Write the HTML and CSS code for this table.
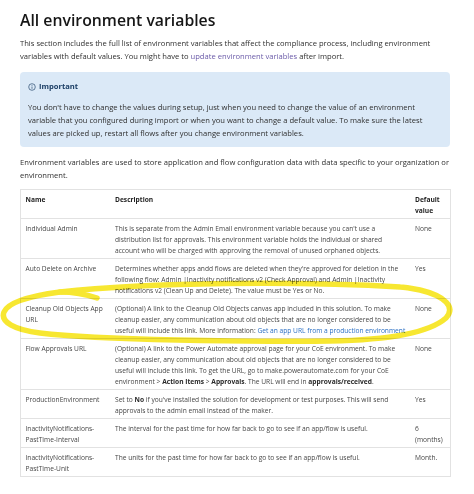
FILE: index.html
```html
<!DOCTYPE html>
<html lang="en">
<head>
<meta charset="utf-8">
<title>All environment variables</title>
<link rel="stylesheet" href="styles.css">
</head>
<body>
<main class="page">
  <h1 class="title">All environment variables</h1>
  <p class="intro">This section includes the full list of environment variables that affect the compliance process, including environment variables with default values. You might have to <a class="link-visited" href="#">update environment variables</a> after import.</p>
  <div class="alert">
    <p class="alert-title">
      <svg class="alert-icon" viewBox="0 0 16 16" aria-hidden="true"><circle cx="8" cy="8" r="6.6" fill="none" stroke="currentColor" stroke-width="1.3"/><rect x="7.35" y="7" width="1.3" height="4.6" fill="currentColor"/><circle cx="8" cy="5" r="0.85" fill="currentColor"/></svg>
      <span>Important</span>
    </p>
    <p class="alert-body">You don't have to change the values during setup, just when you need to change the value of an environment variable that you configured during import or when you want to change a default value. To make sure the latest values are picked up, restart all flows after you change environment variables.</p>
  </div>
  <p class="lead">Environment variables are used to store application and flow configuration data with data specific to your organization or environment.</p>
  <table class="vars">
    <colgroup><col class="c-name"><col class="c-desc"><col class="c-def"></colgroup>
    <thead>
      <tr><th>Name</th><th>Description</th><th>Default value</th></tr>
    </thead>
    <tbody>
      <tr><td>Individual Admin</td><td>This is separate from the Admin Email environment variable because you can't use a distribution list for approvals. This environment variable holds the individual or shared account who will be charged with approving the removal of unused orphaned objects.</td><td>None</td></tr>
      <tr><td>Auto Delete on Archive</td><td>Determines whether apps andd flows are deleted when they're approved for deletion in the following flow: Admin |Inactivity notifications v2 (Check Approval) and Admin |Inactivity notifications v2 (Clean Up and Delete). The value must be Yes or No.</td><td>Yes</td></tr>
      <tr><td>Cleanup Old Objects App URL</td><td>(Optional) A link to the Cleanup Old Objects canvas app included in this solution. To make cleanup easier, any communication about old objects that are no longer considered to be useful will include this link. More information: <a class="link" href="#">Get an app URL from a production environment</a></td><td>None</td></tr>
      <tr><td>Flow Approvals URL</td><td>(Optional) A link to the Power Automate approval page for your CoE environment. To make cleanup easier, any communication about old objects that are no longer considered to be useful will include this link. To get the URL, go to make.powerautomate.com for your CoE environment &gt; <b>Action Items</b> &gt; <b>Approvals</b>. The URL will end in <b>approvals/received</b>.</td><td>None</td></tr>
      <tr><td>ProductionEnvironment</td><td>Set to <b>No</b> if you've installed the solution for development or test purposes. This will send approvals to the admin email instead of the maker.</td><td>Yes</td></tr>
      <tr><td>InactivityNotifications-PastTime-Interval</td><td>The interval for the past time for how far back to go to see if an app/flow is useful.</td><td>6 (months)</td></tr>
      <tr><td>InactivityNotifications-PastTime-Unit</td><td>The units for the past time for how far back to go to see if an app/flow is useful.</td><td>Month.</td></tr>
    </tbody>
  </table>
</main>
<svg class="scribble" viewBox="0 0 474 494" aria-hidden="true">
  <path d="M 400 287 C 300 281, 150 282, 60 292 C 30 296, 8 302, 4 312 C 0 322, 15 330, 40 333 C 100 340, 250 342, 330 341 C 390 340, 430 332, 446 318 C 456 307, 445 296, 420 290 C 410 288, 405 287, 400 287" />
  <path d="M 97 298 C 88 295, 75 292, 60 292" />
</svg>
</body>
</html>
```
FILE: styles.css
```css
html, body {
  margin: 0;
  padding: 0;
  background: #ffffff;
}
body {
  font-family: "Open Sans", "Noto Sans", sans-serif;
  color: #2e2e2e;
  position: relative;
  width: 474px;
  min-height: 494px;
  overflow: hidden;
}
.page {
  width: 430px;
  padding: 9px 24px 0 20px;
  display: flex;
  flex-direction: column;
}
.title {
  margin: 0;
  font-size: 15.8px;
  line-height: 22px;
  font-weight: 600;
  color: #161616;
}
.intro {
  margin: 6px 0 0;
  font-size: 7.62px;
  line-height: 13px;
}
.link-visited {
  color: #6a5aa8;
  text-decoration: none;
}
.alert {
  margin-top: 9px;
  background: #dbe9f7;
  border-radius: 4px;
  padding: 8px 8px 7px 8px;
  display: flex;
  flex-direction: column;
  gap: 8px;
}
.alert p {
  margin: 0;
  font-size: 7.62px;
  line-height: 13px;
}
.alert-title {
  display: flex;
  align-items: center;
  gap: 3px;
  font-weight: 700;
  color: #1c3f66;
}
.alert-icon {
  width: 8px;
  height: 8px;
  color: #1c3f66;
}
.alert-body {
  color: #2e2e2e;
}
.lead {
  margin: 9px 0 0;
  font-size: 7.62px;
  line-height: 13px;
}
.vars {
  margin-top: 7px;
  width: 430px;
  table-layout: fixed;
  border-collapse: collapse;
  border: 1px solid #e2e2e2;
  font-size: 6.65px;
  line-height: 11px;
  color: #474747;
}
.c-name { width: 90px; }
.c-desc { width: 300px; }
.c-def { width: 40px; }
.vars th, .vars td {
  text-align: left;
  vertical-align: top;
  padding: 3.5px 4.5px 2.5px 4.5px;
  border-bottom: 1px solid #e2e2e2;
}
.vars th {
  font-weight: 700;
  color: #1f1f1f;
}
.vars b {
  font-weight: 700;
  color: #2a2a2a;
}
.link {
  color: #2a6fc4;
  text-decoration: none;
}
.scribble {
  position: absolute;
  left: 0;
  top: 0;
  width: 474px;
  height: 494px;
  pointer-events: none;
  fill: none;
  stroke: #f7e51a;
  stroke-width: 5.5;
  stroke-linecap: round;
  stroke-linejoin: round;
  mix-blend-mode: multiply;
  opacity: 0.9;
}
```
